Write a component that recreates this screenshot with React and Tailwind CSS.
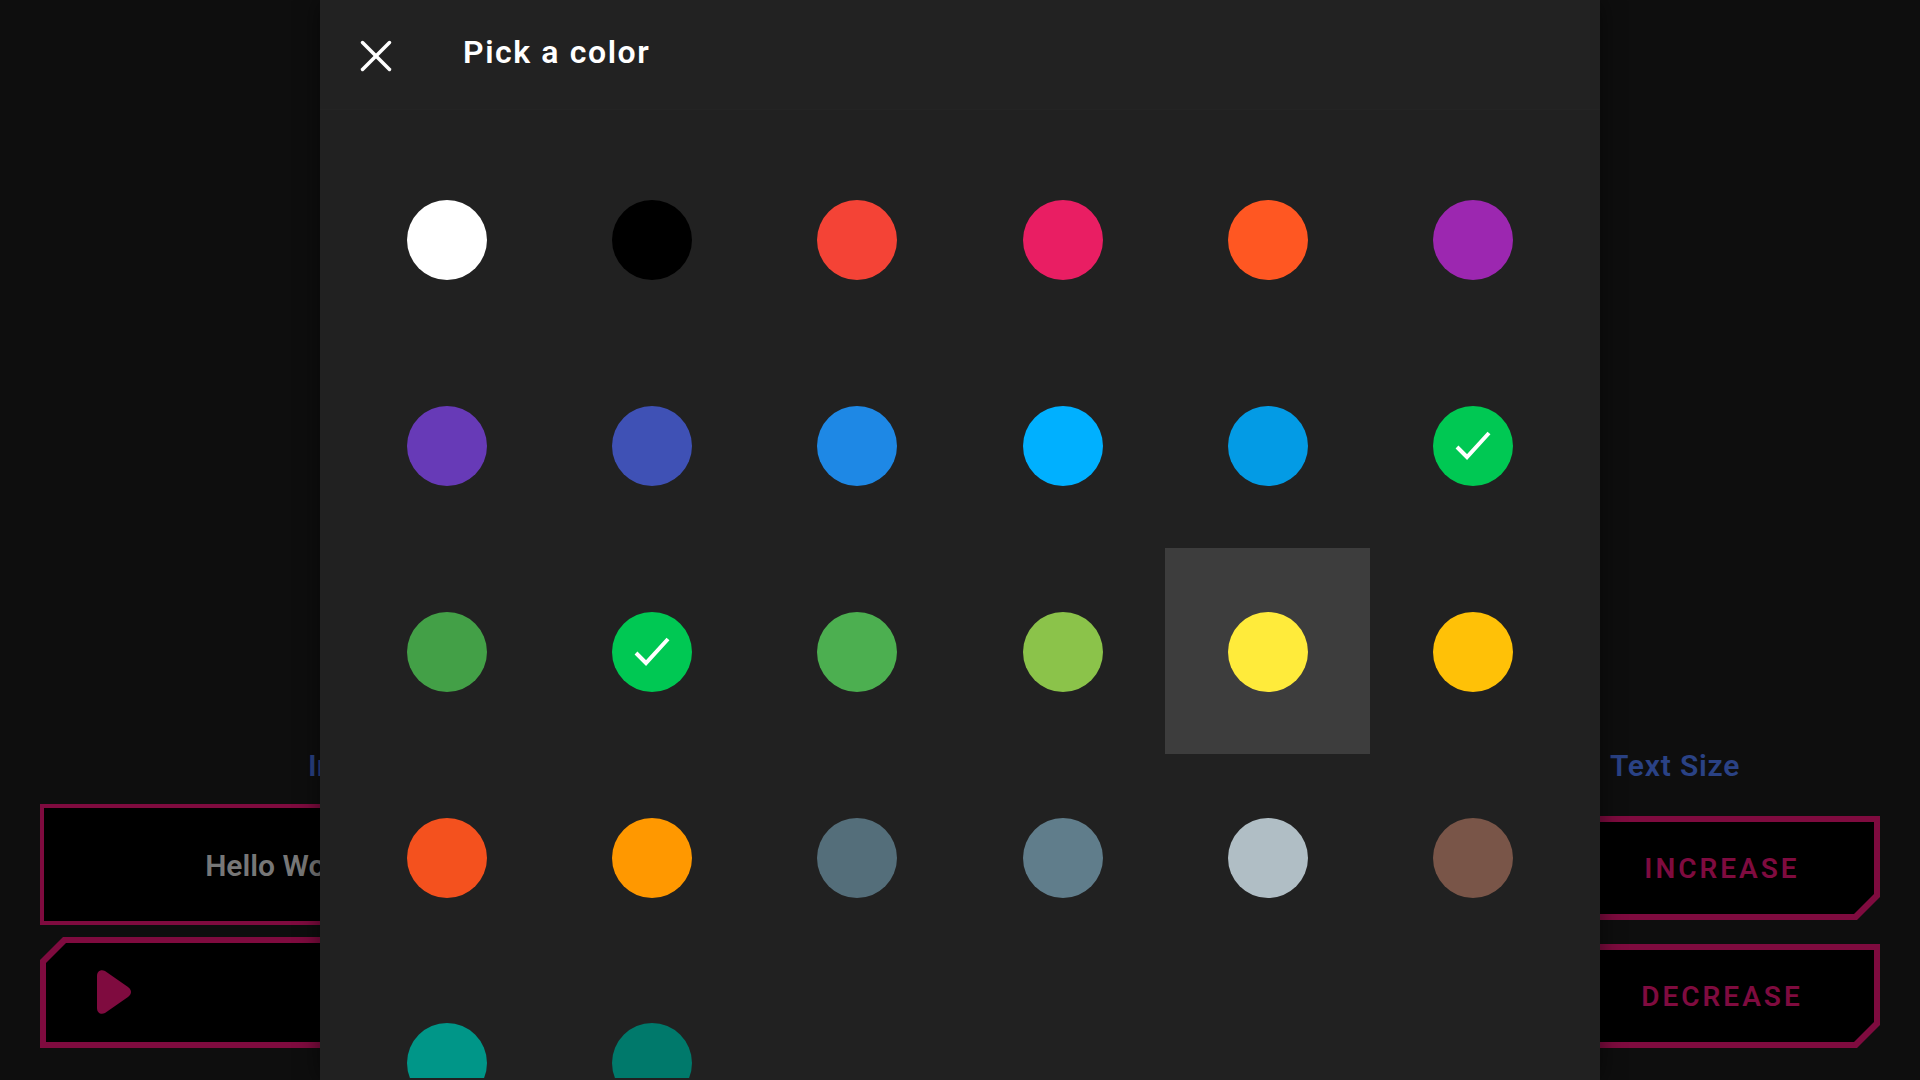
import { X } from 'lucide-react'

const COLORS = [
  '#ffffff', '#000000', '#f44336', '#e91e63', '#ff5722', '#9c27b0',
  '#673ab7', '#3f51b5', '#1e88e5', '#00b0ff', '#039be5', '#00c853',
  '#43a047', '#00c853', '#4caf50', '#8bc34a', '#ffeb3b', '#ffc107',
  '#f4511e', '#ff9800', '#546e7a', '#607d8b', '#b0bec5', '#795548',
  '#009688', '#00796b',
]
const CHECKED = [11, 13]
const HOVERED = 16

function ChamferButton({ children, corner }) {
  const clip = corner === 'tl'
    ? '[clip-path:polygon(23px_0,100%_0,100%_100%,0_100%,0_23px)]'
    : '[clip-path:polygon(0_0,100%_0,100%_calc(100%-23px),calc(100%-23px)_100%,0_100%)]'
  const innerClip = corner === 'tl'
    ? '[clip-path:polygon(20px_0,100%_0,100%_100%,0_100%,0_20px)]'
    : '[clip-path:polygon(0_0,100%_0,100%_calc(100%-20px),calc(100%-20px)_100%,0_100%)]'
  return (
    <div className={`h-full bg-[#7f0b3f] p-1.5 ${clip}`}>
      <div className={`h-full bg-black flex items-center ${innerClip}`}>{children}</div>
    </div>
  )
}

function Swatch({ color, checked, hovered }) {
  return (
    <div className={`flex items-center justify-center pt-px ${hovered ? 'bg-[#3d3d3d] mr-[0.4px]' : ''}`}>
      <div className="w-20 h-20 rounded-full" style={{ backgroundColor: color }}>
        {checked && (
          <svg viewBox="0 0 80 80" className="w-20 h-20" fill="none" stroke="#fff" strokeWidth="4">
            <path d="M24 41 L34 51 L56 27" />
          </svg>
        )}
      </div>
    </div>
  )
}

export default function App() {
  return (
    <div className="relative h-screen overflow-hidden bg-[#0e0e0e] font-['Roboto',sans-serif]">
      {/* Page behind the dialog */}
      <div className="h-full flex items-end justify-between pl-10 pr-10 pb-8">
        <div className="w-[486px]">
          <div className="h-9 mb-5 pl-[268px] text-[30px] leading-9 font-semibold text-[#2a4285]">Input</div>
          <div className="h-[121px] pt-0.5 border-4 border-[#7f0b3f] bg-black flex items-center justify-center text-[30px] font-semibold text-[#777777]">
            Hello World
          </div>
          <div className="h-[111px] mt-3">
            <ChamferButton corner="tl">
              <svg viewBox="0 0 36 44" className="w-9 h-11 ml-[50px] -mt-[2px]" fill="#7f0b3f">
                <path d="M1 6 C1 1 5 -1 9 1 L32 17 C36 20 36 24 32 27 L9 43 C5 45 1 43 1 38 Z" />
              </svg>
            </ChamferButton>
          </div>
        </div>
        <div className="w-[316px]">
          <div className="h-9 mb-8 pl-[46px] text-[30px] leading-9 font-semibold tracking-[0.8px] text-[#2a4285]">Text Size</div>
          <div className="h-[104px]">
            <ChamferButton corner="br">
              <span className="w-full pt-0.5 text-center text-[28px] font-semibold tracking-[3px] text-[#7f0b3f]">INCREASE</span>
            </ChamferButton>
          </div>
          <div className="h-[104px] mt-6">
            <ChamferButton corner="br">
              <span className="w-full pt-0.5 text-center text-[28px] font-semibold tracking-[3px] text-[#7f0b3f]">DECREASE</span>
            </ChamferButton>
          </div>
        </div>
      </div>

      {/* Color picker dialog */}
      <div className="absolute inset-0 flex justify-center">
        <div className="w-[1280px] h-full bg-[#212121] rounded-t flex flex-col shadow-[0_0_24px_rgba(0,0,0,0.55)]">
          <header className="h-[110px] shrink-0 flex border-b border-[#242424] bg-[#222222]">
            <div className="w-[112px] flex items-center justify-center pt-0.5">
              <X size={54} strokeWidth={1.55} className="text-white" />
            </div>
            <h1 className="ml-[31px] pt-[31px] text-[32px] leading-[42px] font-semibold tracking-[1.6px] text-white">Pick a color</h1>
          </header>
          <div className="flex-1 min-h-0 overflow-hidden px-6 pt-[26.8px]">
            <div className="grid grid-cols-6 auto-rows-[205.8px]">
              {COLORS.map((color, i) => (
                <Swatch key={i} color={color} checked={CHECKED.includes(i)} hovered={i === HOVERED} />
              ))}
            </div>
          </div>
          <div className="h-0.5 shrink-0 bg-[#212121]" />
        </div>
      </div>
    </div>
  )
}
